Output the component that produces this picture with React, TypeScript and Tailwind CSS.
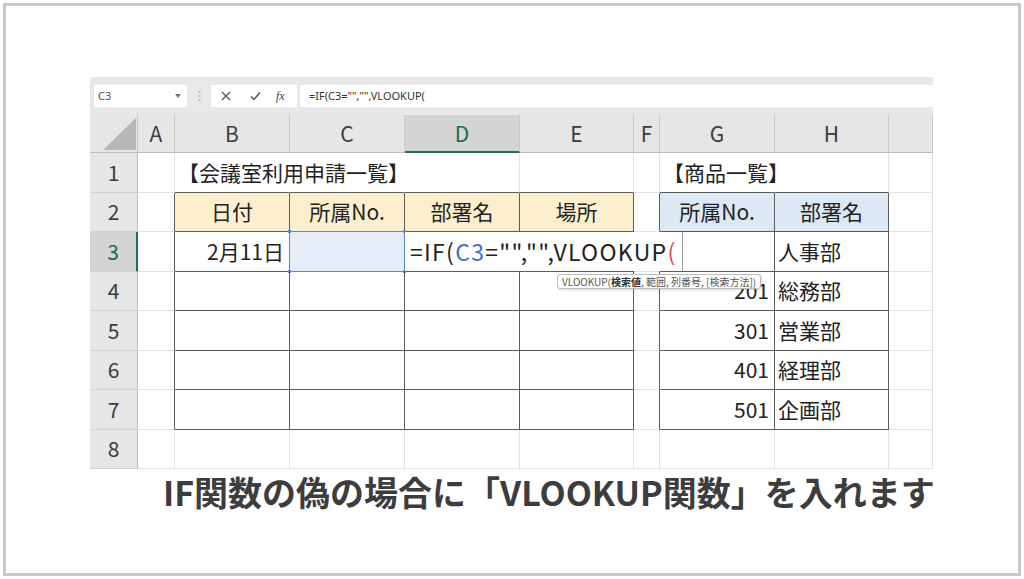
import React from 'react';

const COLS = ['A', 'B', 'C', 'D', 'E', 'F', 'G', 'H', ''];
const FONT = "font-['Noto_Sans_CJK_JP','Noto_Sans',sans-serif]";

type Align = 'left' | 'center' | 'right';
const DATA: Record<string, { text: string; align: Align }> = {
  '1-2': { text: '【会議室利用申請一覧】', align: 'left' },
  '1-7': { text: '【商品一覧】', align: 'left' },
  '2-2': { text: '日付', align: 'center' },
  '2-3': { text: '所属No.', align: 'center' },
  '2-4': { text: '部署名', align: 'center' },
  '2-5': { text: '場所', align: 'center' },
  '2-7': { text: '所属No.', align: 'center' },
  '2-8': { text: '部署名', align: 'center' },
  '3-2': { text: '2月11日', align: 'right' },
  '3-8': { text: '人事部', align: 'left' },
  '4-7': { text: '201', align: 'right' },
  '4-8': { text: '総務部', align: 'left' },
  '5-7': { text: '301', align: 'right' },
  '5-8': { text: '営業部', align: 'left' },
  '6-7': { text: '401', align: 'right' },
  '6-8': { text: '経理部', align: 'left' },
  '7-7': { text: '501', align: 'right' },
  '7-8': { text: '企画部', align: 'left' },
};

const inLeft = (r: number, c: number) => r >= 2 && r <= 7 && c >= 2 && c <= 5;
const inRight = (r: number, c: number) => r >= 2 && r <= 7 && c >= 7 && c <= 8;
const inTable = (r: number, c: number) => inLeft(r, c) || inRight(r, c);

// gridlines hidden where row 1 titles overflow
const hiddenRight = (r: number, c: number) => r === 1 && (c === 2 || c === 3 || c === 7);

function FormulaBar() {
  return (
    <div className="h-[38px] bg-[#e8e8e8] flex items-center">
      <div className="ml-[4px] w-[93px] h-[22px] bg-white flex items-center justify-between pl-[4px] pr-[6px]">
        <span className="text-[11px] text-[#555] font-['Noto_Sans',sans-serif]">C3</span>
        <svg width="6" height="4" viewBox="0 0 6 4">
          <polygon points="0,0 6,0 3,4" fill="#777" />
        </svg>
      </div>
      <div className="w-[24px] flex justify-center">
        <svg width="3" height="12" viewBox="0 0 3 12">
          <circle cx="1.5" cy="2" r="1" fill="#b0b0b0" />
          <circle cx="1.5" cy="6" r="1" fill="#b0b0b0" />
          <circle cx="1.5" cy="10" r="1" fill="#b0b0b0" />
        </svg>
      </div>
      <div className="w-[86px] h-[22px] bg-white flex items-center">
        <svg className="ml-[10px]" width="10" height="10" viewBox="0 0 10 10">
          <path d="M1 1 L9 9 M9 1 L1 9" stroke="#555" strokeWidth="1.4" />
        </svg>
        <svg className="ml-[19px]" width="11" height="10" viewBox="0 0 11 10">
          <path d="M1 5.5 L4 8.5 L10 1.5" stroke="#555" strokeWidth="1.5" fill="none" />
        </svg>
        <span className="ml-[15px] text-[12px] italic text-[#444] font-['Liberation_Serif',serif]">fx</span>
      </div>
      <div className="ml-[3px] flex-1 h-[22px] bg-white flex items-center pl-[9px]">
        <span className="text-[11px] text-[#333] font-['Noto_Sans',sans-serif]">=IF(C3="","",VLOOKUP(</span>
      </div>
    </div>
  );
}

function Corner() {
  return (
    <div className="bg-[#e6e6e6] border-r border-b border-r-[#c4c4c4] border-b-[#bcbcbc]">
      <svg width="47" height="37" viewBox="0 0 47 37">
        <polygon points="13,35 46,35 46,3" fill="#b7b7b7" />
      </svg>
    </div>
  );
}

function ColHeader({ c }: { c: number }) {
  const active = c === 4;
  return (
    <div
      className={
        'flex items-center justify-center border-r border-r-[#cacaca] text-[21px] ' +
        (active
          ? 'bg-[#d4d4d4] border-b-2 border-b-[#217346] text-[#1e6b41]'
          : 'bg-[#e6e6e6] border-b border-b-[#bcbcbc] text-[#3c3c3c]')
      }
    >
      {COLS[c - 1]}
    </div>
  );
}

function RowHeader({ r }: { r: number }) {
  const active = r === 3;
  return (
    <div
      className={
        'flex items-center justify-center border-b border-b-[#d2d2d2] text-[21px] ' +
        (active
          ? 'bg-[#d4d4d4] border-r-2 border-r-[#217346] text-[#1e6b41]'
          : 'bg-[#e6e6e6] border-r border-r-[#bcbcbc] text-[#3c3c3c]')
      }
    >
      {r}
    </div>
  );
}

function Editor() {
  return (
    <div className="absolute left-0 top-0 z-10 w-[278px] h-full bg-white border-r border-r-[#9a9a9a] flex items-center pl-[5px] text-[23px] tracking-[1.3px] text-[#222] whitespace-nowrap">
      <span>=IF(</span>
      <span className="text-[#4472c4]">C3</span>
      <span>="","",VLOOKUP</span>
      <span className="text-[#d9534f]">(</span>
      <div className="absolute left-[152px] top-[42px] h-[15px] px-[4px] bg-white border border-[#bdbdbd] rounded-[3px] shadow-[1px_1px_2px_rgba(0,0,0,0.15)] text-[10px] leading-[13px] tracking-normal text-[#555] whitespace-nowrap">
        VLOOKUP(<b className="text-[#333]">検索値</b>, 範囲, 列番号, [検索方法])
      </div>
    </div>
  );
}

function Cell({ r, c }: { r: number; c: number }) {
  const d = DATA[`${r}-${c}`];
  const darkR = inTable(r, c) || inTable(r, c + 1);
  const darkB = inTable(r, c) || inTable(r + 1, c);
  const rCls = hiddenRight(r, c)
    ? 'border-r-transparent'
    : darkR
    ? 'border-r-[#5c5c5c]'
    : 'border-r-[#e2e2e2]';
  const bCls = darkB ? 'border-b-[#5c5c5c]' : 'border-b-[#e2e2e2]';
  let bg = '';
  if (r === 2 && inLeft(r, c)) bg = 'bg-[#fcefcd]';
  if (r === 2 && inRight(r, c)) bg = 'bg-[#dce8f4]';
  if (r === 3 && c === 3) bg = 'bg-[#e6edf8]';
  const align =
    d?.align === 'center' ? 'justify-center' : d?.align === 'right' ? 'justify-end pr-[5px]' : 'justify-start pl-[3px]';

  return (
    <div className={`relative flex items-center border-r border-b whitespace-nowrap text-[21px] text-[#222] ${rCls} ${bCls} ${bg} ${align}`}>
      {d?.text}
      {r === 3 && c === 3 && (
        <div className="absolute -left-px -top-px -right-px -bottom-px border border-[#5b87c8]">
          <div className="absolute -left-[2px] -top-[2px] w-[3px] h-[3px] bg-[#5b87c8]" />
          <div className="absolute -right-[2px] -top-[2px] w-[3px] h-[3px] bg-[#5b87c8]" />
          <div className="absolute -left-[2px] -bottom-[2px] w-[3px] h-[3px] bg-[#5b87c8]" />
          <div className="absolute -right-[2px] -bottom-[2px] w-[3px] h-[3px] bg-[#5b87c8]" />
        </div>
      )}
      {r === 3 && c === 4 && <Editor />}
    </div>
  );
}

export default function App() {
  const cells: React.ReactNode[] = [];
  for (let r = 0; r <= 8; r++) {
    for (let c = 0; c <= 9; c++) {
      const key = `${r}-${c}`;
      if (r === 0 && c === 0) cells.push(<Corner key={key} />);
      else if (r === 0) cells.push(<ColHeader key={key} c={c} />);
      else if (c === 0) cells.push(<RowHeader key={key} r={r} />);
      else cells.push(<Cell key={key} r={r} c={c} />);
    }
  }

  return (
    <div className={`w-[1024px] h-[579px] bg-white p-[3px] ${FONT}`}>
      <div className="h-full border-[3px] border-[#c9c9c9] flex flex-col pt-[71px] pl-[84px]">
        <div className="w-[843px] flex flex-col">
          <FormulaBar />
          <div className="grid grid-cols-[48px_37px_115px_115px_115px_114px_26px_115px_114px_44px] grid-rows-[38px_repeat(8,39.5px)] bg-white leading-none">
            {cells}
          </div>
        </div>
        <div className="mt-[6px] ml-[73px] text-[34px] leading-none font-bold text-[#3d3d3d] whitespace-nowrap">
          IF関数の偽の場合に「VLOOKUP関数」を入れます
        </div>
      </div>
    </div>
  );
}
